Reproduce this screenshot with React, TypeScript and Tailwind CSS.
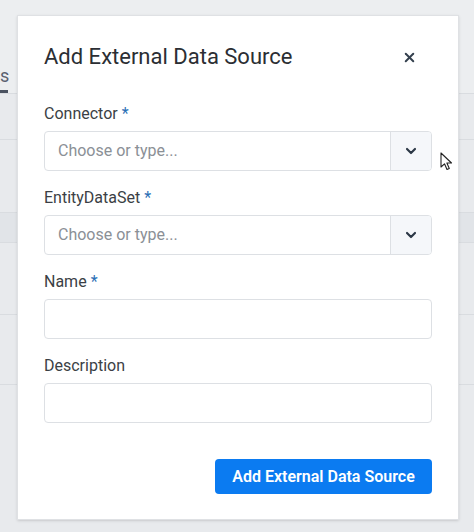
import { ChevronDown, X } from "lucide-react";

function Field({ label, required, select }: { label: string; required?: boolean; select?: boolean }) {
  return (
    <div className="flex flex-col">
      <div className="h-[24px] text-[16px] leading-[25px] text-[#3b3f45]">
        {label}
        {required && <span className="ml-[4px] text-[#2a6fb5]">*</span>}
      </div>
      <div className="mt-[6px] flex h-[40px] rounded-[4px] border border-[#dde0e4] bg-white overflow-hidden">
        <div className="flex-1 flex items-center pl-[13px] text-[16px] text-[#8b9096]">
          {select ? "Choose or type..." : ""}
        </div>
        {select && (
          <div className="w-[41px] flex items-center justify-center border-l border-[#dde0e4] bg-[#f5f7fa]">
            <ChevronDown size={16} strokeWidth={3.2} className="text-[#2c3846]" />
          </div>
        )}
      </div>
    </div>
  );
}

function Cursor() {
  return (
    <svg className="absolute left-[440px] top-[152px]" width="14" height="20" viewBox="0 0 14 20">
      <path
        d="M1 1 L1 15 L4.5 11.8 L7 17.5 L9.3 16.5 L6.9 11 L11.5 11 Z"
        fill="#fff"
        stroke="#222"
        strokeWidth="1.1"
        strokeLinejoin="round"
      />
    </svg>
  );
}

export default function App() {
  return (
    <div
      className="relative h-[532px] w-[474px] overflow-hidden bg-[#e8eaed]"
      style={{ fontFamily: "Roboto, 'Liberation Sans', sans-serif" }}
    >
      {/* page behind the overlay */}
      <div className="flex flex-col">
        <div className="h-[94px] border-b border-[#d9dce0] bg-[#eceef0] relative">
          <span className="absolute left-0 top-[62px] text-[18px] text-[#5a6170]">s</span>
          <div className="absolute left-0 bottom-0 h-[3px] w-[8px] bg-[#4a5260]" />
        </div>
        <div className="h-[46px] border-b border-[#d9dce0]" />
        <div className="h-[72px]" />
        <div className="h-[31px] border-y border-[#d9dce0] bg-[#e1e4e8]" />
        <div className="h-[72px] border-b border-[#d9dce0]" />
        <div className="h-[70px] border-b border-[#d9dce0]" />
      </div>

      <div className="absolute left-[17px] top-[15px] flex h-[505px] w-[442px] flex-col border border-[#dfe1e4] bg-white px-[26px] pt-[27px] shadow-sm">
        <div className="flex h-[28px] items-center justify-between">
          <h2 className="text-[22px] leading-[28px] text-[#2b2e33]">Add External Data Source</h2>
          <X size={15} strokeWidth={3.2} className="mr-[15px] text-[#34404e]" />
        </div>

        <div className="mt-[30px] flex flex-col gap-[14px]">
          <Field label="Connector" required select />
          <Field label="EntityDataSet" required select />
          <Field label="Name" required />
          <Field label="Description" />
        </div>

        <div className="mt-[36px] flex justify-end">
          <button className="h-[35px] w-[217px] rounded-[4px] bg-[#0b7bf1] text-[16px] font-semibold text-white">
            Add External Data Source
          </button>
        </div>
      </div>

      <Cursor />
    </div>
  );
}
